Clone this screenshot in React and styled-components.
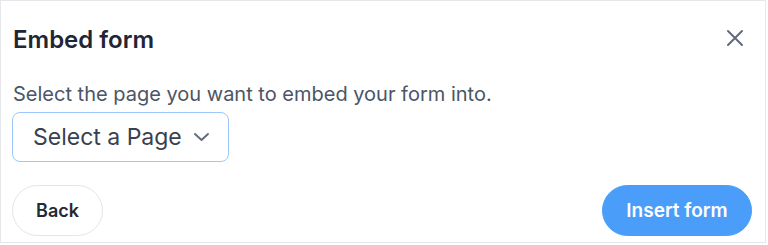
import React from "react";
import styled, { createGlobalStyle } from "styled-components";

const GlobalStyle = createGlobalStyle`
  html, body {
    margin: 0;
    padding: 0;
    background: #ffffff;
  }
  body {
    font-family: Inter, "Noto Sans", sans-serif;
  }
`;

const Panel = styled.div`
  box-sizing: border-box;
  width: 766px;
  height: 243px;
  border: 1px solid #e6e7ea;
  background: #fff;
  padding: 0 13px 0 11px;
  display: flex;
  flex-direction: column;
`;

const Header = styled.div`
  display: flex;
  align-items: center;
  justify-content: space-between;
  height: 76px;
  padding-left: 1px;
`;

const Title = styled.h2`
  margin: 0;
  font-size: 24px;
  font-weight: 600;
  color: #1f2636;
`;

const CloseButton = styled.button`
  border: 0;
  background: none;
  padding: 0;
  width: 24px;
  height: 24px;
  display: flex;
  align-items: center;
  justify-content: center;
  color: #5f6b7f;
  cursor: pointer;
  margin: -2px 5px 0 0;
`;

const Hint = styled.p`
  margin: 5px 0 0;
  font-size: 20px;
  line-height: 24px;
  color: #4b5565;
  padding-left: 1px;
`;

const SelectBox = styled.button`
  margin-top: 6px;
  box-sizing: border-box;
  width: 217px;
  height: 50px;
  border: 1px solid #9cc8fb;
  border-radius: 8px;
  background: #fff;
  display: flex;
  align-items: center;
  gap: 11px;
  padding: 0 0 0 20px;
  font-family: inherit;
  font-size: 23px;
  color: #374151;
  cursor: pointer;
`;

const Footer = styled.div`
  display: flex;
  justify-content: space-between;
  align-items: center;
  margin-top: 23px;
`;

const Pill = styled.button`
  box-sizing: border-box;
  height: 51px;
  border-radius: 26px;
  font-family: inherit;
  font-size: ${(p) => (p.$primary ? 19 : 18)}px;
  font-weight: 600;
  cursor: pointer;
  padding: 0;
  border: 1px solid ${(p) => (p.$primary ? "#4a9df8" : "#e4e5e9")};
  background: ${(p) => (p.$primary ? "#4a9df8" : "#fff")};
  color: ${(p) => (p.$primary ? "#fff" : "#1f2937")};
  width: ${(p) => p.$w}px;
`;

export default function App() {
  return (
    <>
      <GlobalStyle />
      <Panel>
        <Header>
          <Title>Embed form</Title>
          <CloseButton aria-label="Close">
            <svg width="20" height="20" viewBox="0 0 20 20" fill="none" stroke="currentColor" strokeWidth="2" strokeLinecap="round">
              <path d="M3 3l14 14M17 3L3 17" />
            </svg>
          </CloseButton>
        </Header>
        <Hint>Select the page you want to embed your form into.</Hint>
        <SelectBox>
          Select a Page
          <svg width="17" height="10" viewBox="0 0 17 10" fill="none" stroke="#5f6b7f" strokeWidth="1.9" strokeLinecap="round" strokeLinejoin="round">
            <path d="M2 2l6.5 6L15 2" />
          </svg>
        </SelectBox>
        <Footer>
          <Pill $w={91}>Back</Pill>
          <Pill $primary $w={150}>Insert form</Pill>
        </Footer>
      </Panel>
    </>
  );
}
